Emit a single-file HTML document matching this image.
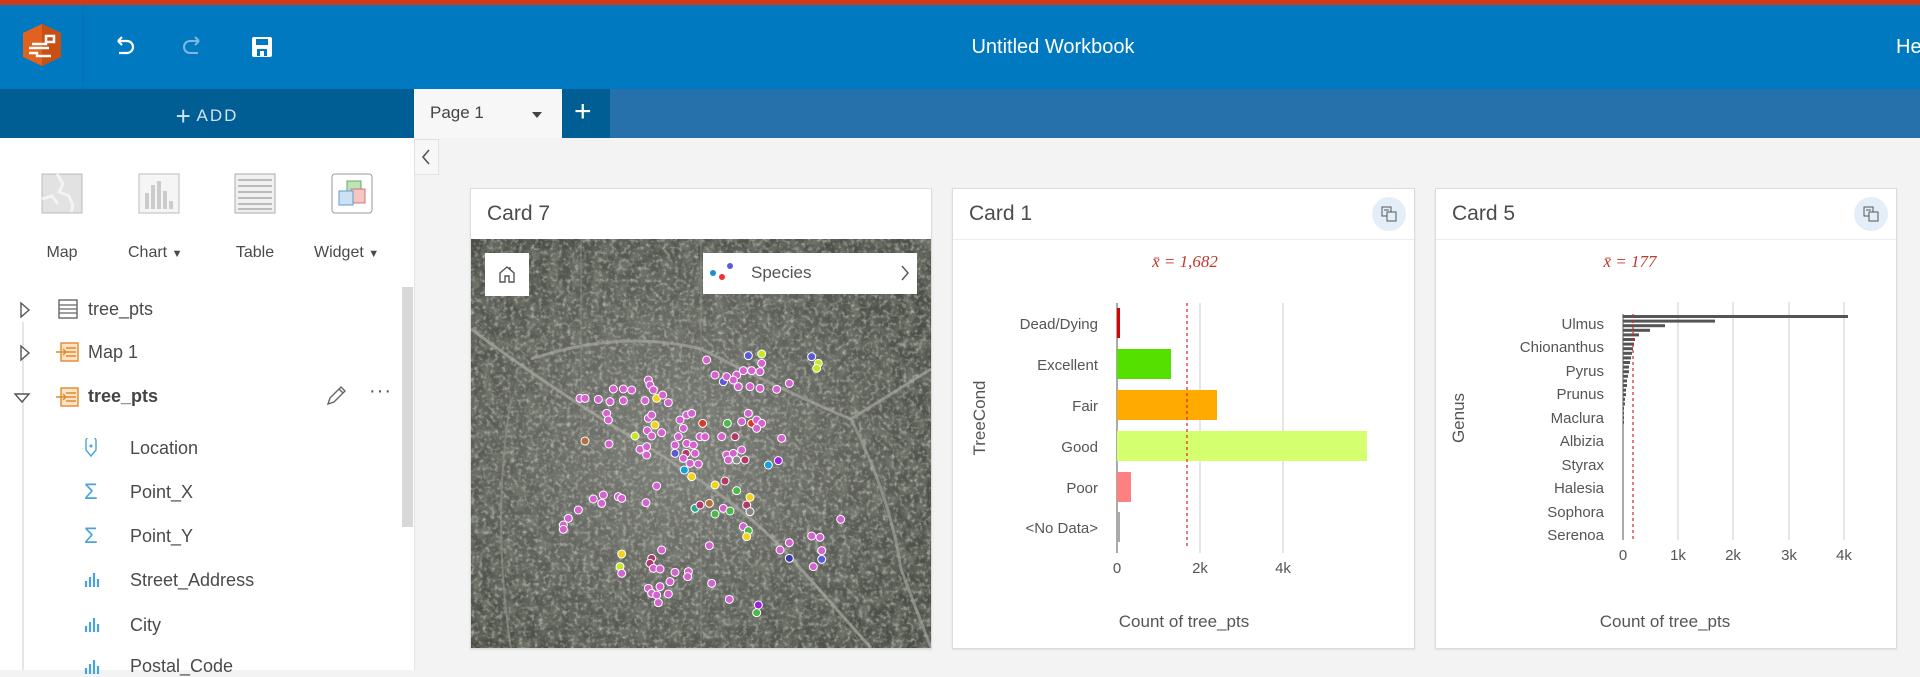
<!DOCTYPE html>
<html><head><meta charset="utf-8"><style>
*{margin:0;padding:0;box-sizing:border-box}
body{width:1920px;height:670px;overflow:hidden;background:#f3f3f3;font-family:"Liberation Sans",sans-serif;position:relative;color:#4a4a4a}
.a{position:absolute}
.t{position:absolute;white-space:nowrap}
.card{position:absolute;background:#fff;border:1px solid #dcdcdc;box-shadow:0 1px 2px rgba(0,0,0,.08)}
.card .hd{position:absolute;left:0;right:0;top:0;height:51px;border-bottom:1px solid #ececec}
.card .ttl{position:absolute;left:16px;top:13px;font-size:21px;color:#4c4c4c}
.exp{position:absolute;width:34px;height:34px;border-radius:17px;background:#e3eef8;top:8px;right:8px}
.row{position:absolute;font-size:18px;color:#4a4a4a}
</style></head><body>
<div class="a" style="left:0;top:0;width:1920px;height:5px;background:#cf3a1a"></div>
<div class="a" style="left:0;top:5px;width:1920px;height:84px;background:#0079c1"></div>
<div class="a" style="left:83px;top:5px;width:1px;height:84px;background:#0a6fae"></div>
<svg class="a" style="left:19px;top:22px" width="46" height="46" viewBox="0 0 46 46">
<polygon points="23,2 42,11 42,35 23,44 4,35 4,11" fill="#e0621f"/>
<polygon points="23,2 42,11 42,35 23,44" fill="#c94f14"/>
<path d="M13 22h14v-8h8v6h-8M10 26h20M10 31h8v3h14" stroke="#fff" stroke-width="2.5" fill="none"/>
</svg>
<svg class="a" style="left:112px;top:36px" width="24" height="22" viewBox="0 0 24 22"><path d="M6 5h9a6 6 0 0 1 0 12H7M6 5l4-4M6 5l4 4" stroke="#fff" stroke-width="2.2" fill="none"/></svg>
<svg class="a" style="left:181px;top:36px" width="24" height="22" viewBox="0 0 24 22"><path d="M18 5H9a6 6 0 0 0 0 12h8M18 5l-4-4M18 5l-4 4" stroke="#7fb8e0" stroke-width="2" fill="none"/></svg>
<svg class="a" style="left:251px;top:36px" width="22" height="22" viewBox="0 0 22 22"><rect x="1" y="1" width="20" height="20" rx="2" fill="#fff"/><rect x="5" y="3" width="12" height="6" fill="#0079c1"/><rect x="6" y="13" width="10" height="7" fill="#0079c1"/><rect x="9" y="15" width="4" height="5" fill="#fff"/></svg>
<div class="t" style="left:0;width:2106px;top:36px;text-align:center;font-size:20px;color:#fff">Untitled Workbook</div>
<div class="t" style="left:1896px;top:36px;font-size:20px;color:#fff">He</div>
<div class="a" style="left:0;top:89px;width:1920px;height:49px;background:#2671ab"></div>
<div class="a" style="left:0;top:89px;width:414px;height:49px;background:#005e95"></div>
<div class="t" style="left:0;width:414px;top:101px;text-align:center;font-size:17px;letter-spacing:2px;color:#cfe3f2"><span style="font-size:26px;vertical-align:-4px;letter-spacing:0">+</span> ADD</div>
<div class="a" style="left:414px;top:89px;width:148px;height:49px;background:#f7f7f7"></div>
<div class="t" style="left:430px;top:103px;font-size:17px;color:#444">Page 1</div>
<div class="a" style="left:532px;top:112px;border:5px solid transparent;border-top:6px solid #444"></div>
<div class="a" style="left:562px;top:89px;width:48px;height:49px;background:#005e95"></div>
<div class="t" style="left:574px;top:95px;font-size:30px;color:#fff;font-weight:300">+</div>
<div class="a" style="left:0;top:138px;width:414px;height:532px;background:#fff"></div>
<div class="a" style="left:402px;top:287px;width:11px;height:240px;background:#d8d8d8"></div>
<div class="a" style="left:414px;top:138px;width:1px;height:532px;background:#e4e4e4"></div>
<div class="a" style="left:414px;top:139px;width:25px;height:36px;background:#f7f7f7;border:1px solid #e2e2e2"></div>
<svg class="a" style="left:420px;top:148px" width="12" height="18"><path d="M9 2L3 9l6 7" stroke="#555" stroke-width="1.6" fill="none"/></svg>
<svg class="a" style="left:41px;top:173px" width="42" height="41"><rect x="1" y="1" width="40" height="39" fill="#e2e2e2" stroke="#bbb"/><path d="M16 1l6 10-4 8 10 4 4 10-2 6M1 26l10-3 6 8" stroke="#f4f4f4" stroke-width="3" fill="none"/></svg>
<svg class="a" style="left:138px;top:173px" width="42" height="41"><rect x="1" y="1" width="40" height="39" fill="#f5f5f5" stroke="#bbb"/><rect x="7" y="20" width="4" height="16" fill="#ccc"/><rect x="13" y="12" width="4" height="24" fill="#ccc"/><rect x="19" y="8" width="4" height="28" fill="#ccc"/><rect x="25" y="18" width="4" height="18" fill="#ccc"/><rect x="31" y="28" width="4" height="8" fill="#ccc"/></svg>
<svg class="a" style="left:234px;top:173px" width="42" height="41"><rect x="1" y="1" width="40" height="39" fill="#f0f0f0" stroke="#aaa"/><path d="M4 7h34M4 13h34M4 19h34M4 25h34M4 31h34M4 36h34" stroke="#bbb" stroke-width="2"/></svg>
<svg class="a" style="left:331px;top:173px" width="42" height="41"><rect x="1" y="1" width="40" height="39" rx="3" fill="#fff" stroke="#999"/><rect x="16" y="8" width="14" height="14" fill="#bfe3b8" stroke="#6a6"/><rect x="20" y="16" width="14" height="14" fill="#f6c7c0" stroke="#c77"/><rect x="8" y="18" width="14" height="14" fill="#cbe2f6" stroke="#69c"/></svg>
<div class="t" style="left:62px;top:244px;font-size:16px;transform:translateX(-50%)">Map</div>
<div class="t" style="left:128px;top:244px;font-size:16px">Chart <span style="font-size:11px">▼</span></div>
<div class="t" style="left:255px;top:244px;font-size:16px;transform:translateX(-50%)">Table</div>
<div class="t" style="left:314px;top:244px;font-size:16px">Widget <span style="font-size:11px">▼</span></div>
<div class="a" style="left:22px;top:322px;width:2px;height:348px;background:#e6e6e6"></div>
<svg class="a" style="left:19px;top:301px" width="12" height="18"><path d="M2 2l8 7-8 7z" stroke="#555" stroke-width="1.4" fill="#fff"/></svg>
<svg class="a" style="left:19px;top:344px" width="12" height="18"><path d="M2 2l8 7-8 7z" stroke="#555" stroke-width="1.4" fill="#fff"/></svg>
<svg class="a" style="left:13px;top:392px" width="18" height="12"><path d="M2 2h14l-7 8z" stroke="#555" stroke-width="1.4" fill="#fff"/></svg>
<svg class="a" style="left:58px;top:299px" width="20" height="20"><rect x="1" y="1" width="18" height="18" fill="none" stroke="#666" stroke-width="1.4"/><path d="M1 6h18M1 10h18M1 14h18" stroke="#666" stroke-width="1.2"/></svg>
<svg class="a" style="left:55px;top:342px" width="24" height="20"><rect x="6" y="1" width="17" height="18" fill="#fde3c8" stroke="#e08a2a" stroke-width="1.4"/><path d="M11 6h10M11 10h10M11 14h10M1 10h10M8 7l3 3-3 3" stroke="#e08a2a" stroke-width="1.4" fill="none"/></svg>
<svg class="a" style="left:55px;top:387px" width="24" height="20"><rect x="6" y="1" width="17" height="18" fill="#fde3c8" stroke="#e08a2a" stroke-width="1.4"/><path d="M11 6h10M11 10h10M11 14h10M1 10h10M8 7l3 3-3 3" stroke="#e08a2a" stroke-width="1.4" fill="none"/></svg>
<div class="row" style="left:88px;top:299px">tree_pts</div>
<div class="row" style="left:88px;top:342px">Map 1</div>
<div class="row" style="left:88px;top:386px;font-weight:bold;color:#444">tree_pts</div>
<svg class="a" style="left:325px;top:385px" width="22" height="22"><path d="M3 19l2-6L16 2l4 4L9 17z M14 4l4 4" stroke="#666" stroke-width="1.4" fill="none"/></svg>
<div class="t" style="left:369px;top:380px;font-size:20px;letter-spacing:1px;color:#555">···</div>
<svg class="a" style="left:84px;top:438px" width="14" height="20"><path d="M2 3a5 5 0 0 1 10 0v9l-5 6-5-6z" stroke="#4aa3df" stroke-width="1.4" fill="none"/><circle cx="7" cy="8" r="1.5" fill="#4aa3df"/></svg>
<div class="t" style="left:84px;top:479px;font-size:22px;color:#4aa3df">Σ</div>
<div class="t" style="left:84px;top:523px;font-size:22px;color:#4aa3df">Σ</div>
<svg class="a" style="left:84px;top:571px" width="16" height="16"><path d="M2 10v6M6 6v10M10 2v14M14 8v8" stroke="#4aa3df" stroke-width="2.2"/></svg>
<svg class="a" style="left:84px;top:616px" width="16" height="16"><path d="M2 10v6M6 6v10M10 2v14M14 8v8" stroke="#4aa3df" stroke-width="2.2"/></svg>
<svg class="a" style="left:84px;top:658px" width="16" height="16"><path d="M2 10v6M6 6v10M10 2v14M14 8v8" stroke="#4aa3df" stroke-width="2.2"/></svg>
<div class="row" style="left:130px;top:438px">Location</div>
<div class="row" style="left:130px;top:482px">Point_X</div>
<div class="row" style="left:130px;top:526px">Point_Y</div>
<div class="row" style="left:130px;top:570px">Street_Address</div>
<div class="row" style="left:130px;top:615px">City</div>
<div class="row" style="left:130px;top:656px">Postal_Code</div>

<div class="card" style="left:470px;top:188px;width:462px;height:461px">
<div class="hd"></div><div class="ttl">Card 7</div></div>
<svg class="a" style="left:471px;top:239px" width="460" height="409" viewBox="0 0 460 409">
<defs><radialGradient id="g" cx="0.45" cy="0.52" r="0.6"><stop offset="0" stop-color="#7e7f7a"/><stop offset="0.55" stop-color="#62645d"/><stop offset="1" stop-color="#4c4f47"/></radialGradient>
<filter id="n" x="0" y="0" width="100%" height="100%"><feTurbulence type="fractalNoise" baseFrequency="0.09" numOctaves="3" seed="4"/><feColorMatrix values="0 0 0 0 0.2  0 0 0 0 0.22  0 0 0 0 0.18  0 0 0 1.6 -0.55"/></filter>
<filter id="n2" x="0" y="0" width="100%" height="100%"><feTurbulence type="fractalNoise" baseFrequency="0.25" numOctaves="2" seed="9"/><feColorMatrix values="0 0 0 0 0.85  0 0 0 0 0.85  0 0 0 0 0.82  0 0 0 1.8 -0.85"/></filter></defs>
<rect width="460" height="409" fill="url(#g)"/>
<rect width="460" height="409" filter="url(#n)"/>
<rect width="460" height="409" filter="url(#n2)" opacity=".7"/>
<path d="M0 90 Q80 150 180 210 T330 330 L400 409" stroke="#a9a9a3" stroke-width="3" fill="none" opacity=".7"/>
<path d="M60 120 Q150 90 230 110 Q330 160 380 180 L460 130" stroke="#a5a59f" stroke-width="3" fill="none" opacity=".7"/>
<path d="M380 180 Q420 260 430 330 L460 409" stroke="#a09f98" stroke-width="3" fill="none" opacity=".7"/>
<path d="M40 160 Q20 280 40 409" stroke="#8e8e88" stroke-width="2" fill="none" opacity=".7"/>
<path d="M230 0 V409 M110 0 V200" stroke="#8a8a84" stroke-width="1.5" fill="none" opacity=".6"/>
</svg>
<svg class="a" style="left:460px;top:180px" width="500" height="480" viewBox="0 0 1500 1440" id="dots"></svg>
<div class="a" style="left:485px;top:253px;width:44px;height:43px;background:#fff"></div>
<svg class="a" style="left:497px;top:264px" width="20" height="20"><path d="M3 18V9l7-6 7 6v9h-5v-6H8v6z M13 3v3" stroke="#555" stroke-width="1.4" fill="none"/></svg>
<div class="a" style="left:703px;top:253px;width:214px;height:41px;background:#fff"></div>
<svg class="a" style="left:708px;top:260px" width="30" height="24"><circle cx="5" cy="13" r="3" fill="#1a8fd6"/><circle cx="14" cy="17" r="3" fill="#e33"/><circle cx="22" cy="6" r="3" fill="#5b5bd6"/></svg>
<div class="t" style="left:751px;top:263px;font-size:17px;color:#555">Species</div>
<svg class="a" style="left:899px;top:264px" width="12" height="18"><path d="M3 2l6 7-6 7" stroke="#555" stroke-width="1.4" fill="none"/></svg>

<div class="card" style="left:952px;top:188px;width:463px;height:461px">
<div class="hd"></div><div class="ttl">Card 1</div><div class="exp"></div>
<svg class="a" style="right:17px;top:17px" width="16" height="16"><rect x="1" y="1" width="9" height="9" fill="none" stroke="#555"/><rect x="6" y="6" width="9" height="9" fill="#e3eef8" stroke="#555"/><path d="M3 4h5" stroke="#555"/></svg>
</div>
<div class="t" style="left:1185px;top:252px;transform:translateX(-50%);font-family:'Liberation Serif',serif;font-style:italic;font-size:17px;color:#c0392b">x̄ = 1,682</div>
<svg class="a" style="left:952px;top:188px" width="463" height="461">
<g stroke="#ccc" stroke-width="1"><path d="M248 115V365M331 115V365"/></g>
<path d="M165 115V365" stroke="#555" stroke-width="1"/>
<rect x="165" y="120" width="3" height="30" fill="#d00"/>
<rect x="165" y="161" width="54" height="30" fill="#55e000"/>
<rect x="165" y="202" width="100" height="30" fill="#ffaa00"/>
<rect x="165" y="243" width="250" height="30" fill="#d4ff6e"/>
<rect x="165" y="284" width="14" height="30" fill="#ff8080"/>
<rect x="165" y="324" width="3" height="30" fill="#aaa"/>
<path d="M235 115V360" stroke="#d22" stroke-width="1.2" stroke-dasharray="3,3"/>
<g font-family="Liberation Sans" font-size="15" fill="#555" text-anchor="end">
<text x="146" y="141">Dead/Dying</text><text x="146" y="182">Excellent</text><text x="146" y="223">Fair</text><text x="146" y="264">Good</text><text x="146" y="305">Poor</text><text x="146" y="345">&lt;No Data&gt;</text></g>
<g font-family="Liberation Sans" font-size="15" fill="#555" text-anchor="middle"><text x="165" y="385">0</text><text x="248" y="385">2k</text><text x="331" y="385">4k</text>
<text x="232" y="439" font-size="17">Count of tree_pts</text>
<text transform="translate(33 230) rotate(-90)" font-size="17">TreeCond</text></g>
</svg>

<div class="card" style="left:1435px;top:188px;width:462px;height:461px">
<div class="hd"></div><div class="ttl">Card 5</div><div class="exp"></div>
<svg class="a" style="right:17px;top:17px" width="16" height="16"><rect x="1" y="1" width="9" height="9" fill="none" stroke="#555"/><rect x="6" y="6" width="9" height="9" fill="#e3eef8" stroke="#555"/><path d="M3 4h5" stroke="#555"/></svg>
</div>
<div class="t" style="left:1630px;top:252px;transform:translateX(-50%);font-family:'Liberation Serif',serif;font-style:italic;font-size:17px;color:#c0392b">x̄ = 177</div>
<svg class="a" style="left:1435px;top:188px" width="462" height="461">
<g stroke="#ccc"><path d="M243 114V352M298 114V352M354 114V352M409 114V352"/></g>
<path d="M188 126V352" stroke="#555"/>
<g id="bars" fill="#555"></g>
<path d="M198 126V352" stroke="#d22" stroke-width="1.2" stroke-dasharray="3,3"/>
<g font-family="Liberation Sans" font-size="15" fill="#555" text-anchor="end">
<text x="169" y="141">Ulmus</text><text x="169" y="164">Chionanthus</text><text x="169" y="188">Pyrus</text><text x="169" y="211">Prunus</text><text x="169" y="235">Maclura</text><text x="169" y="258">Albizia</text><text x="169" y="282">Styrax</text><text x="169" y="305">Halesia</text><text x="169" y="329">Sophora</text><text x="169" y="352">Serenoa</text></g>
<g font-family="Liberation Sans" font-size="15" fill="#555" text-anchor="middle"><text x="188" y="372">0</text><text x="243" y="372">1k</text><text x="298" y="372">2k</text><text x="354" y="372">3k</text><text x="409" y="372">4k</text>
<text x="230" y="439" font-size="17">Count of tree_pts</text>
<text transform="translate(29 230) rotate(-90)" font-size="17">Genus</text></g>
</svg>
<script>
var w=[225,92,42,27,16,12,11,10,9,8,7,6,6,5,4,4,3,3,2,2,1,1,1,1];
var g=document.getElementById('bars'),s='';
for(var i=0;i<w.length;i++){s+='<rect x="188" y="'+(127+i*4.6)+'" width="'+w[i]+'" height="3"/>';}
g.innerHTML=s;
var P='#d463d0',C={yg:'#c8e62a',b:'#5a5ad8',y:'#f2d21a',r:'#d83a2a',g:'#4cb84c',m:'#b03a6a',br:'#b07040',c:'#1aa0d8',gr:'#888',t:'#2aa88a',pu:'#a020e0',n:'#3a3aa0'};
var d=[[740,540],[865,527,'b'],[905,522,'yg'],[1055,530,'b'],[1075,550,'yg'],[1070,565,'yg'],[905,550],[765,585],[790,605,'b'],[800,590],[830,585],[850,572],[875,572],[900,575],[820,600],[835,620],[870,620],[900,625],[950,628],[988,610],[565,600],[570,615],[580,630],[460,627],[490,627],[515,630],[360,655],[375,655],[415,658],[450,665],[490,662],[555,662],[590,655,'y'],[608,645],[625,668],[440,700],[445,720],[565,715],[585,735,'y'],[575,705],[680,705],[695,700],[660,720],[670,745],[655,770],[645,795],[680,790],[700,795],[720,770],[735,770],[728,730,'r'],[802,730,'g'],[845,725],[865,700],[875,730,'r'],[890,720],[905,730],[890,745],[785,770],[825,770,'m'],[965,775],[375,783,'br'],[447,792],[525,768,'yg'],[562,752],[575,768],[605,758],[540,808],[560,800],[560,825],[645,820,'b'],[678,820,'m'],[705,820],[670,835],[690,850],[715,852],[673,870,'c'],[695,890,'y'],[800,825],[820,820],[845,810],[805,840],[830,840,'gr'],[855,840,'m'],[925,855,'c'],[955,842,'pu'],[590,918],[765,915,'y'],[795,903,'m'],[830,932,'g'],[870,952,'y'],[860,975,'m'],[870,995,'gr'],[400,957],[430,945],[425,970],[475,950],[485,955],[558,968],[705,985,'t'],[720,975,'m'],[748,970,'br'],[765,1002,'g'],[790,985],[810,993,'g'],[355,990],[325,1015],[310,1035],[310,1048],[1142,1018],[850,1040],[865,1052,'g'],[860,1070,'y'],[1055,1068],[1080,1072],[748,1097],[988,1088],[960,1110],[1085,1112],[1085,1138,'b'],[988,1135,'n'],[1060,1160],[485,1122,'y'],[480,1160,'yg'],[485,1180],[605,1110],[575,1135,'m'],[570,1150,'m'],[580,1165],[600,1167],[645,1177],[685,1175],[683,1190],[630,1205],[600,1220],[565,1225],[575,1240],[590,1245],[625,1242],[595,1268],[755,1210],[808,1258],[895,1275,'pu'],[890,1298,'g']];
var h='';d.forEach(function(p){h+='<circle cx="'+p[0]+'" cy="'+p[1]+'" r="12" fill="'+(p[2]?C[p[2]]:P)+'" stroke="#fff" stroke-width="3"/>';});
document.getElementById('dots').innerHTML=h;
</script>
</body></html>
